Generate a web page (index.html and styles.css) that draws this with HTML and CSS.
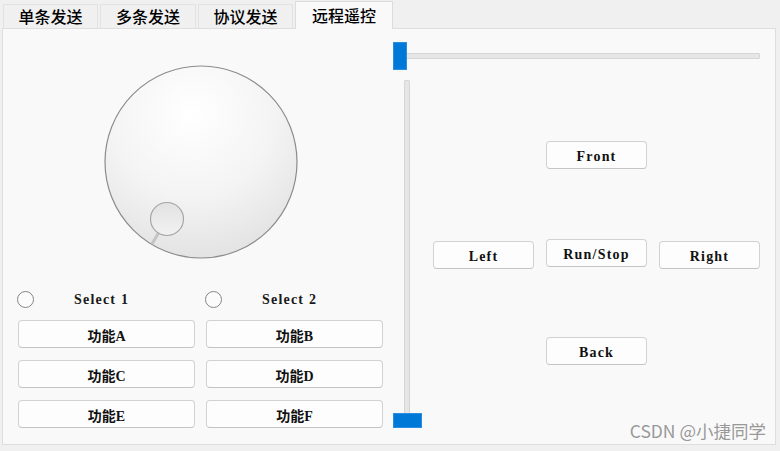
FILE: index.html
```
<!DOCTYPE html>
<html>
<head>
<meta charset="utf-8">
<link rel="stylesheet" href="styles.css">
</head>
<body>
<div class="window">
  <div class="tabs">
    <div class="tab w95">单条发送</div>
    <div class="tab w96">多条发送</div>
    <div class="tab w95">协议发送</div>
    <div class="tab tab-active">远程遥控</div>
  </div>
  <div class="pane">
    <div class="left">
      <div class="dial">
        <svg width="195" height="195" viewBox="0 0 195 195">
          <defs>
            <radialGradient id="dg" cx="0.45" cy="0.25" r="0.85">
              <stop offset="0" stop-color="#ffffff"/>
              <stop offset="0.5" stop-color="#f4f4f4"/>
              <stop offset="1" stop-color="#dedede"/>
            </radialGradient>
            <linearGradient id="ig" x1="0" y1="0" x2="0" y2="1">
              <stop offset="0" stop-color="#e2e2e2"/>
              <stop offset="1" stop-color="#f2f2f2"/>
            </linearGradient>
          </defs>
          <circle cx="97" cy="97" r="96" fill="url(#dg)" stroke="#8c8c8c" stroke-width="1.2"/>
          <line x1="54.5" y1="168" x2="48" y2="179" stroke="#c4c4c4" stroke-width="3"/>
          <circle cx="63" cy="154" r="16.5" fill="url(#ig)" stroke="#a6a6a6" stroke-width="1.2"/>
        </svg>
      </div>
      <div class="grid">
        <div class="radio"><span class="circle"></span><span class="rlabel">Select 1</span></div>
        <div class="radio"><span class="circle"></span><span class="rlabel">Select 2</span></div>
        <div class="btn">功能A</div>
        <div class="btn">功能B</div>
        <div class="btn">功能C</div>
        <div class="btn">功能D</div>
        <div class="btn">功能E</div>
        <div class="btn">功能F</div>
      </div>
    </div>
    <div class="right">
      <div class="hslider">
        <div class="htrack"></div>
        <div class="hhandle"></div>
      </div>
      <div class="rbody">
        <div class="vslider">
          <div class="vtrack"></div>
          <div class="vhandle"></div>
        </div>
        <div class="controls">
          <div class="slot"></div>
          <div class="btn dbtn">Front</div>
          <div class="slot"></div>
          <div class="btn dbtn low">Left</div>
          <div class="btn dbtn">Run/Stop</div>
          <div class="btn dbtn low">Right</div>
          <div class="slot"></div>
          <div class="btn dbtn">Back</div>
          <div class="slot"></div>
        </div>
      </div>
    </div>
    <div class="watermark">CSDN @小捷同学</div>
  </div>
</div>
</body>
</html>
```
FILE: styles.css
```
* { box-sizing: border-box; }
html, body { margin: 0; padding: 0; }
body {
  width: 780px;
  height: 451px;
  background: #f0f0f0;
  overflow: hidden;
  font-family: "Liberation Serif", "Noto Sans CJK SC", serif;
  color: #000;
}
.window { width: 780px; height: 451px; }
.tabs {
  display: flex;
  align-items: flex-end;
  gap: 2px;
  height: 28px;
  padding-left: 3px;
}
.tab {
  height: 24px;
  border: 1px solid #e2e2e2;
  border-bottom: none;
  background: #f0f0f0;
  font-family: "Noto Sans CJK SC", sans-serif;
  font-size: 16px;
  font-weight: 500;
  line-height: 22px;
  text-align: center;
  color: #000;
}
.w95 { width: 95px; }
.w96 { width: 96px; }
.tab-active {
  width: 98px;
  height: 28px;
  margin-bottom: -1px;
  background: #f9f9f9;
  border-color: #dcdcdc;
  position: relative;
  z-index: 1;
  line-height: 26px;
}
.pane {
  position: relative;
  margin-left: 2px;
  width: 774px;
  height: 417px;
  background: #f9f9f9;
  border: 1px solid #dedede;
  display: flex;
}
.left {
  width: 387px;
  padding: 36px 0 0 15px;
  display: flex;
  flex-direction: column;
}
.dial {
  width: 195px;
  height: 195px;
  margin-left: 86px;
}
.dial svg { display: block; }
.grid {
  margin-top: 31px;
  display: grid;
  grid-template-columns: 177px 177px;
  column-gap: 11px;
  row-gap: 12px;
  grid-template-rows: 17px 28px 28px 28px;
}
.radio {
  display: flex;
  align-items: center;
  margin-left: -1px;
}
.circle {
  width: 17px;
  height: 17px;
  border-radius: 50%;
  border: 1px solid #858585;
  background: #fbfbfb;
  flex: none;
}
.rlabel {
  margin-left: 40px;
  font-size: 14px;
  font-weight: bold;
  letter-spacing: 1.2px;
  color: #1a1a1a;
}
.btn {
  height: 28px;
  padding-top: 1px;
  border: 1px solid #d2d2d2;
  border-bottom-color: #c4c4c4;
  border-radius: 4px;
  background: #fdfdfd;
  display: flex;
  align-items: center;
  justify-content: center;
  font-size: 14px;
  font-weight: bold;
  color: #111;
}
.right {
  flex: 1;
  padding-top: 13px;
  padding-left: 3px;
  display: flex;
  flex-direction: column;
}
.hslider {
  position: relative;
  width: 367px;
  height: 28px;
  display: flex;
  align-items: center;
}
.htrack {
  width: 100%;
  height: 6px;
  background: #e6e6e6;
  border: 1px solid #d6d6d6;
  border-radius: 1px;
}
.hhandle {
  position: absolute;
  left: 0;
  top: 0;
  width: 14px;
  height: 28px;
  background: #0078d7;
  border: 1px solid #2b8de0;
}
.rbody {
  display: flex;
  margin-top: 10px;
}
.vslider {
  position: relative;
  width: 30px;
  height: 348px;
  display: flex;
  justify-content: center;
  padding-left: 2px;
}
.vtrack {
  width: 6px;
  height: 100%;
  background: #e6e6e6;
  border: 1px solid #d6d6d6;
  border-radius: 1px;
  margin-left: -4px;
}
.vhandle {
  position: absolute;
  left: 0;
  bottom: 0;
  width: 29px;
  height: 15px;
  background: #0078d7;
  border: 1px solid #2b8de0;
}
.controls {
  margin-left: 10px;
  margin-top: 61px;
  display: grid;
  grid-template-columns: 101px 101px 101px;
  grid-template-rows: 28px 28px 28px;
  column-gap: 12px;
  row-gap: 70px;
  align-self: flex-start;
}
.dbtn { letter-spacing: 1.2px; padding-top: 3px; }
.low { margin-top: 2px; }
.watermark {
  position: absolute;
  right: 9px;
  bottom: 1px;
  font-family: "Noto Sans CJK SC", sans-serif;
  font-size: 17.5px;
  color: #999;
}
```
